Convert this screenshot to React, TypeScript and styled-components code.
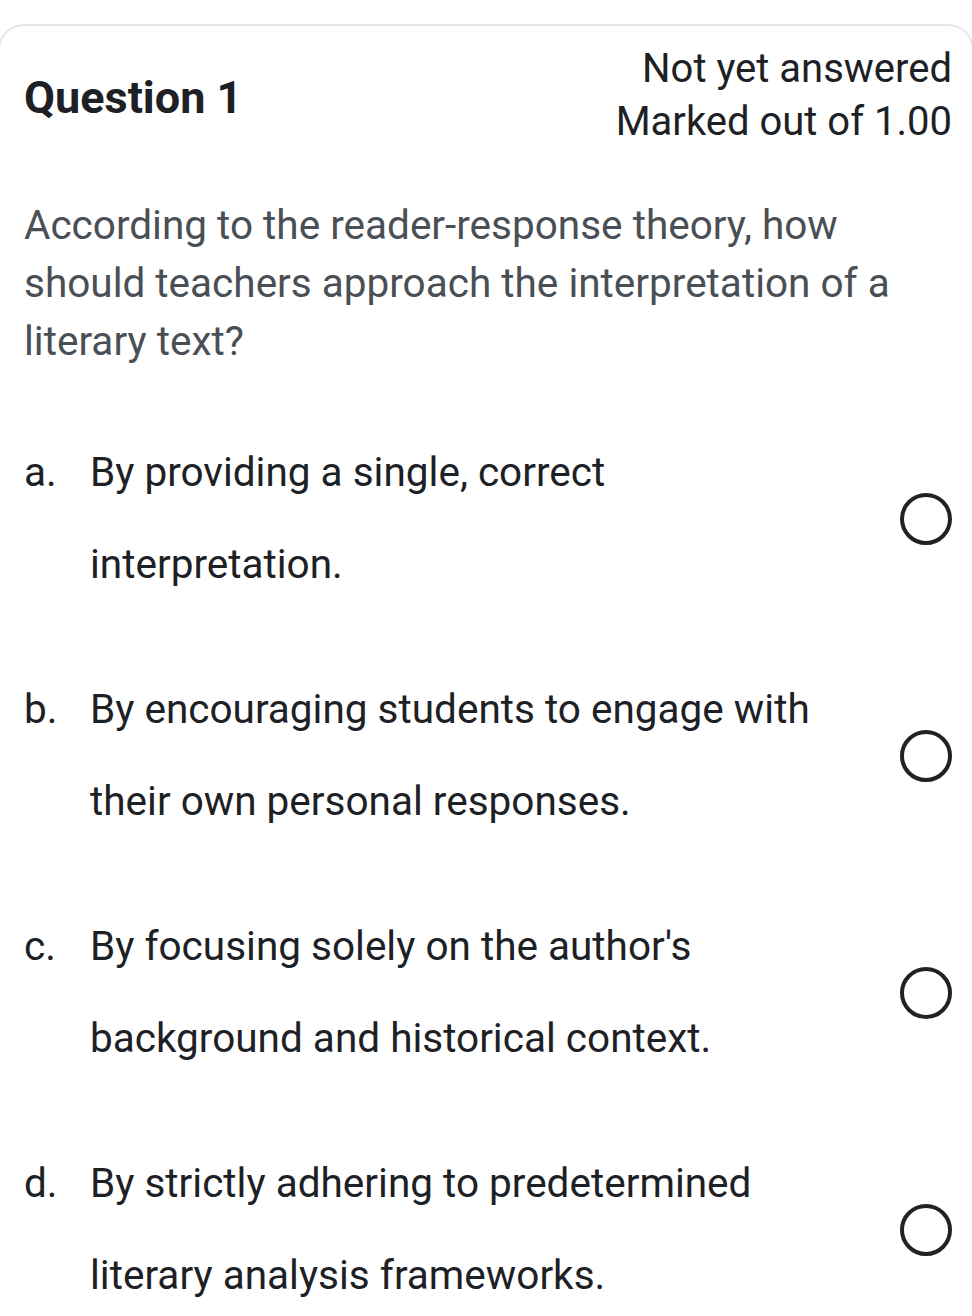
import React from 'react';
import styled, { createGlobalStyle } from 'styled-components';

const GlobalStyle = createGlobalStyle`
  html, body {
    margin: 0;
    padding: 0;
    background: #ffffff;
  }
  body {
    font-family: Roboto, "Noto Sans", "Liberation Sans", sans-serif;
    color: #1d2125;
    -webkit-font-smoothing: antialiased;
  }
`;

interface Choice {
  letter: string;
  text: string;
}

const choices: Choice[] = [
  { letter: 'a.', text: 'By providing a single, correct interpretation.' },
  { letter: 'b.', text: 'By encouraging students to engage with their own personal responses.' },
  { letter: 'c.', text: "By focusing solely on the author's background and historical context." },
  { letter: 'd.', text: 'By strictly adhering to predetermined literary analysis frameworks.' },
];

const App = () => {
  return (
    <>
      <GlobalStyle />
      <Card>
        <Header>
          <Title>Question 1</Title>
          <Status>
            <div>Not yet answered</div>
            <div>Marked out of 1.00</div>
          </Status>
        </Header>

        <QuestionText>
          According to the reader-response theory, how should teachers approach the
          interpretation of a literary text?
        </QuestionText>

        <ChoiceList>
          {choices.map(choice => (
            <ChoiceRow key={choice.letter}>
              <Letter>{choice.letter}</Letter>
              <ChoiceText>{choice.text}</ChoiceText>
              <Radio type="radio" name="q1" aria-label={choice.letter} />
            </ChoiceRow>
          ))}
        </ChoiceList>
      </Card>
    </>
  );
};

const Card = styled.section`
  margin: 24px -2px 0 -2px;
  min-height: calc(100vh - 24px);
  border: 2px solid #e6e6e6;
  border-bottom: none;
  border-radius: 26px 26px 0 0;
  padding: 16px 20px 0 24px;
  box-sizing: border-box;
`;

const Header = styled.header`
  display: flex;
  justify-content: space-between;
  align-items: flex-start;
`;

const Title = styled.h3`
  margin: 32px 0 0;
  font-size: 45px;
  line-height: 48px;
  font-weight: 700;
  color: #1d2125;
`;

const Status = styled.div`
  text-align: right;
  font-size: 40px;
  line-height: 53px;
  color: #1d2125;
`;

const QuestionText = styled.p`
  margin: 48px 0 0;
  padding-right: 40px;
  font-size: 40.5px;
  line-height: 58px;
  color: #4a4f55;
`;

const ChoiceList = styled.div`
  display: flex;
  flex-direction: column;
  gap: 53px;
  margin-top: 56px;
`;

const ChoiceRow = styled.label`
  display: grid;
  grid-template-columns: 66px 1fr 52px;
  align-items: start;
  font-size: 40.5px;
  line-height: 92px;
  color: #1d2125;
  cursor: pointer;
`;

const Letter = styled.span``;

const ChoiceText = styled.span`
  max-width: 750px;
`;

const Radio = styled.input`
  appearance: none;
  -webkit-appearance: none;
  align-self: center;
  width: 52px;
  height: 52px;
  margin: 2px 0 0;
  border: 4.5px solid #222222;
  border-radius: 50%;
  background: #ffffff;
  box-sizing: border-box;
  cursor: pointer;
`;

export default App;
